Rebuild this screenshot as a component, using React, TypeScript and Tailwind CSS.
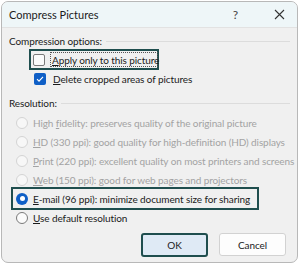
import React from "react";

const font = { fontFamily: 'Lato, "Noto Sans", sans-serif' };

interface RadioRowProps {
    label: React.ReactNode;
    disabled?: boolean;
    checked?: boolean;
    focused?: boolean;
}

const Radio: React.FC<{ checked?: boolean; disabled?: boolean }> = ({ checked, disabled }) => {
    if (checked) {
        return (
            <span className="flex h-[12px] w-[12px] shrink-0 items-center justify-center rounded-full bg-[#0f5fc6]">
                <span className="h-[5px] w-[5px] rounded-full bg-white" />
            </span>
        );
    }
    return (
        <span
            className={
                disabled
                    ? "h-[12px] w-[12px] shrink-0 rounded-full border border-[#d4d4d4] bg-[#f7f7f7]"
                    : "h-[12px] w-[12px] shrink-0 rounded-full border border-[#7a7a7a] bg-[#fbfbfb]"
            }
        />
    );
};

const RadioRow: React.FC<RadioRowProps> = ({ label, disabled, checked, focused }) => (
    <div className="relative flex h-[19px] shrink-0 items-center gap-[5px] pl-[7px]">
        {focused && (
            <span className="absolute -top-[2px] -bottom-[2px] left-[2px] w-[248px] border-2 border-[#1f4e4e]" />
        )}
        <Radio checked={checked} disabled={disabled} />
        <span className={disabled ? "whitespace-nowrap text-[#a3a3a3]" : "whitespace-nowrap text-[#1b1b1b]"}>{label}</span>
    </div>
);

export default function App() {
    return (
        <div className="h-[265px] w-[300px] bg-white pl-[1px] pt-[1px] text-[10px] leading-none tracking-[-0.1px]" style={font}>
            <div className="flex h-[262px] w-[297px] flex-col overflow-hidden rounded-[7px] border border-[#b8b8b8] bg-[#f0f0f0]">
                {/* title bar */}
                <div className="flex h-[26px] shrink-0 items-center border-b border-[#e2e2e2] bg-[#eef6f8] pl-[7px] pr-[12px]">
                    <span className="flex-1 whitespace-nowrap text-[11px] tracking-normal text-[#1b1b1b]">Compress Pictures</span>
                    <span className="mr-[36px] text-[12px] text-[#444]">?</span>
                    <svg width="11" height="11" viewBox="0 0 11 11" className="text-[#333]">
                        <path d="M1 1 L10 10 M10 1 L1 10" stroke="currentColor" strokeWidth="1.1" />
                    </svg>
                </div>

                <div className="flex flex-1 flex-col px-[7px]">
                    {/* compression options */}
                    <div className="mt-[7px] flex h-[12px] shrink-0 items-center gap-[4px]">
                        <span className="whitespace-nowrap text-[#1b1b1b]">Compression options:</span>
                        <span className="h-px flex-1 bg-[#dcdcdc]" />
                    </div>
                    <div className="mt-[2px] ml-[20px] flex h-[21px] w-[130px] shrink-0 items-center border-2 border-[#1f4e4e] pl-[2px]">
                        <span className="h-[12px] w-[12px] shrink-0 rounded-[2px] border border-[#7a7a7a] bg-[#fbfbfb]" />
                        <span className="ml-[5px] flex h-[15px] w-[108px] items-center whitespace-nowrap border border-dotted border-[#555] px-[1px] text-[#1b1b1b]">
                            <span><u>A</u>pply only to this picture</span>
                        </span>
                    </div>
                    <div className="mt-[2px] ml-[25px] flex h-[14px] shrink-0 items-center">
                        <span className="flex h-[12px] w-[12px] shrink-0 items-center justify-center rounded-[2px] bg-[#0f5fc6]">
                            <svg width="8" height="8" viewBox="0 0 8 8">
                                <path d="M1 4.2 L3 6.2 L7 1.8" stroke="white" strokeWidth="1.1" fill="none" />
                            </svg>
                        </span>
                        <span className="ml-[7px] whitespace-nowrap text-[#1b1b1b]"><u>D</u>elete cropped areas of pictures</span>
                    </div>

                    {/* resolution */}
                    <div className="mt-[11px] flex h-[12px] shrink-0 items-center gap-[4px]">
                        <span className="whitespace-nowrap text-[#1b1b1b]">Resolution:</span>
                        <span className="h-px flex-1 bg-[#dcdcdc]" />
                    </div>
                    <div className="mt-[4px] flex flex-col">
                        <RadioRow disabled label={<>High <u>f</u>idelity: preserves quality of the original picture</>} />
                        <RadioRow disabled label={<><u>H</u>D (330 ppi): good quality for high-definition (HD) displays</>} />
                        <RadioRow disabled label={<><u>P</u>rint (220 ppi): excellent quality on most printers and screens</>} />
                        <RadioRow disabled label={<><u>W</u>eb (150 ppi): good for web pages and projectors</>} />
                        <RadioRow checked focused label={<><u>E</u>-mail (96 ppi): minimize document size for sharing</>} />
                        <RadioRow label={<><u>U</u>se default resolution</>} />
                    </div>

                    {/* buttons */}
                    <div className="mt-[6px] flex shrink-0 justify-end gap-[11px] pr-[4px]">
                        <button className="h-[24px] w-[67px] rounded-[3px] border-2 border-[#1f4e4e] bg-[#dfeaf5] text-[#1b1b1b]">OK</button>
                        <button className="h-[23px] w-[67px] rounded-[3px] border border-[#d2d2d2] bg-[#fdfdfd] text-[#1b1b1b]">Cancel</button>
                    </div>
                </div>
            </div>
        </div>
    );
}
